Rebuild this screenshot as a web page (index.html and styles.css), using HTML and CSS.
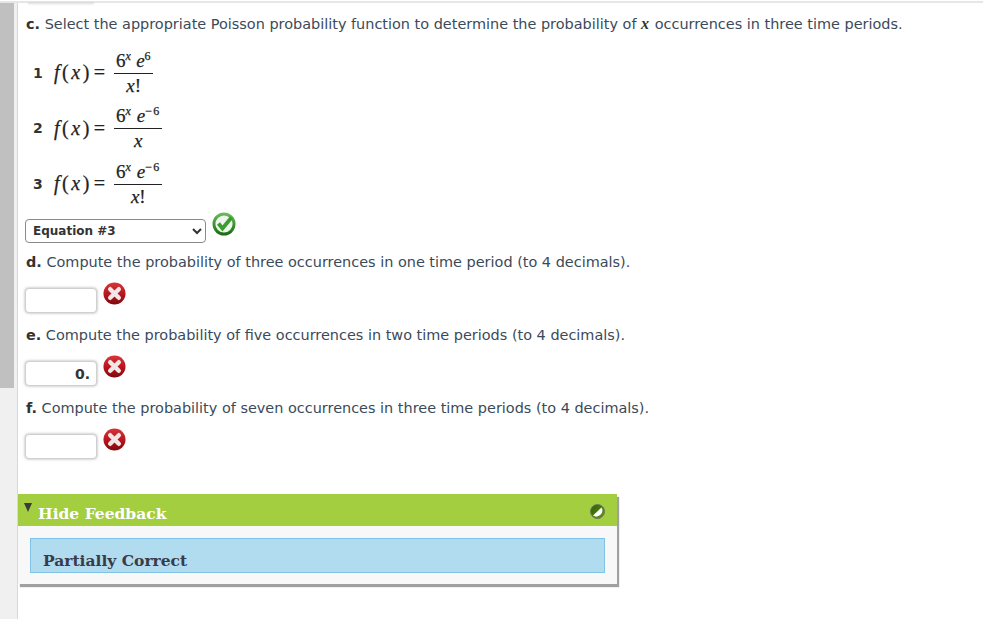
FILE: index.html
```html
<!DOCTYPE html>
<html lang="en">
<head>
    <meta charset="UTF-8">
    <title>Poisson probability</title>
    <link rel="stylesheet" href="styles.css">
</head>
<body>
    <svg class="defs" width="0" height="0">
        <defs>
            <linearGradient id="red-ball" x1="0" y1="0" x2="0" y2="1">
                <stop offset="0" stop-color="#d8343a"/>
                <stop offset="0.55" stop-color="#b8141c"/>
                <stop offset="1" stop-color="#7c0a0e"/>
            </linearGradient>
            <linearGradient id="green-ring" x1="0" y1="0" x2="0" y2="1">
                <stop offset="0" stop-color="#6cc05a"/>
                <stop offset="1" stop-color="#17690f"/>
            </linearGradient>
            <linearGradient id="green-knob" x1="0" y1="0" x2="1" y2="1">
                <stop offset="0" stop-color="#2f5a08"/>
                <stop offset="1" stop-color="#62980f"/>
            </linearGradient>
        </defs>
    </svg>
    <div class="top-line"></div>
    <div class="page">
        <div class="rail">
            <div class="rail-thumb"></div>
        </div>
        <div class="content">
            <div class="top-stub"></div>
            <p class="question q-c"><b>c.</b> Select the appropriate Poisson probability function to determine the probability of <i class="math-inline">x</i> occurrences in three time periods.</p>

            <div class="equations">
                <div class="equation">
                    <span class="eq-num">1</span>
                    <span class="math"><i>f</i>(<i>x</i>)</span>
                    <span class="equals">=</span>
                    <span class="frac">
                        <span class="numer">6<sup><i>x</i></sup> <i>e</i><sup>6</sup></span>
                        <span class="denom"><i>x</i>!</span>
                    </span>
                </div>
                <div class="equation">
                    <span class="eq-num">2</span>
                    <span class="math"><i>f</i>(<i>x</i>)</span>
                    <span class="equals">=</span>
                    <span class="frac frac-wide">
                        <span class="numer">6<sup><i>x</i></sup> <i>e</i><sup>−6</sup></span>
                        <span class="denom"><i>x</i></span>
                    </span>
                </div>
                <div class="equation">
                    <span class="eq-num">3</span>
                    <span class="math"><i>f</i>(<i>x</i>)</span>
                    <span class="equals">=</span>
                    <span class="frac frac-wide">
                        <span class="numer">6<sup><i>x</i></sup> <i>e</i><sup>−6</sup></span>
                        <span class="denom"><i>x</i>!</span>
                    </span>
                </div>
            </div>

            <div class="answer answer-select">
                <select class="dropdown">
                    <option>Equation #3</option>
                </select>
                <svg class="mark" width="24" height="24" viewBox="0 0 24 24">
                    <circle cx="12" cy="12" r="11.5" fill="url(#green-ring)"/>
                    <circle cx="12" cy="12" r="8.6" fill="#eef5ec"/>
                    <path d="M6.5 11.5 L10.5 16.5 L19.5 5.5" fill="none" stroke="#3c9c30" stroke-width="3.8"/>
                </svg>
            </div>

            <p class="question"><b>d.</b> Compute the probability of three occurrences in one time period (to 4 decimals).</p>
            <div class="answer">
                <input class="num-input" type="text" value="">
                <svg class="mark mark-wrong" width="23" height="23" viewBox="0 0 24 24">
                    <circle cx="12" cy="12" r="11.5" fill="url(#red-ball)"/>
                    <path d="M7.5 7.5 L16.5 16.5 M16.5 7.5 L7.5 16.5" stroke="#f2e6e6" stroke-width="4.6" stroke-linecap="round"/>
                </svg>
            </div>

            <p class="question"><b>e.</b> Compute the probability of five occurrences in two time periods (to 4 decimals).</p>
            <div class="answer">
                <input class="num-input" type="text" value="0.">
                <svg class="mark mark-wrong" width="23" height="23" viewBox="0 0 24 24">
                    <circle cx="12" cy="12" r="11.5" fill="url(#red-ball)"/>
                    <path d="M7.5 7.5 L16.5 16.5 M16.5 7.5 L7.5 16.5" stroke="#f2e6e6" stroke-width="4.6" stroke-linecap="round"/>
                </svg>
            </div>

            <p class="question"><b>f.</b> Compute the probability of seven occurrences in three time periods (to 4 decimals).</p>
            <div class="answer">
                <input class="num-input" type="text" value="">
                <svg class="mark mark-wrong" width="23" height="23" viewBox="0 0 24 24">
                    <circle cx="12" cy="12" r="11.5" fill="url(#red-ball)"/>
                    <path d="M7.5 7.5 L16.5 16.5 M16.5 7.5 L7.5 16.5" stroke="#f2e6e6" stroke-width="4.6" stroke-linecap="round"/>
                </svg>
            </div>

            <div class="feedback">
                <div class="feedback-head">
                    <span class="arrow"></span>
                    <span class="feedback-title">Hide Feedback</span>
                    <svg class="toggle" width="15" height="15" viewBox="0 0 15 15">
                        <circle cx="7.5" cy="7.5" r="7" fill="url(#green-knob)" stroke="#6a7a5a"/>
                        <path d="M3 11.5 L11.5 3.5 A6 6 0 0 1 3 11.5 Z" fill="#fff"/>
                    </svg>
                </div>
                <div class="feedback-body">
                    <div class="feedback-result">Partially Correct</div>
                </div>
            </div>
        </div>
    </div>
</body>
</html>
```

FILE: styles.css
```css
html, body {
    height: 100%;
}
body {
    margin: 0;
    display: flex;
    flex-direction: column;
    background-color: #fff;
    font-family: "DejaVu Sans", Verdana, sans-serif;
    font-size: 14.45px;
    color: #3a4a5a;
    overflow: hidden;
}
.defs {
    position: absolute;
}
.top-line {
    height: 2px;
    margin-top: 1px;
    flex-shrink: 0;
    background-color: #e6e6e6;
}
.page {
    flex: 1;
    display: flex;
}
.rail {
    width: 17px;
    flex-shrink: 0;
    background-color: #f0f0f0;
    border-right: 1px solid #d8d8d8;
}
.rail-thumb {
    width: 14px;
    height: 385px;
    background-color: #c0c0c0;
}
.content {
    flex: 1;
    position: relative;
}
.top-stub {
    position: absolute;
    top: -1px;
    left: 10px;
    width: 66px;
    height: 1px;
    background-color: #ddd;
    box-shadow: 0 1px 2px #ccc;
}
.question {
    margin: 0;
    padding-left: 8px;
    line-height: 18px;
    white-space: nowrap;
}
.question b {
    color: #333;
}
.q-c {
    padding-top: 12px;
}
.math-inline {
    font-family: "Liberation Serif", serif;
    font-weight: bold;
    font-size: 16px;
    margin-right: 1px;
    color: #333;
}
.equations {
    padding: 14px 0 0 15px;
    display: flex;
    flex-direction: column;
    gap: 4.5px;
}
.equation {
    display: flex;
    align-items: center;
    height: 51px;
    color: #222;
    font-family: "Liberation Serif", serif;
    -webkit-text-stroke: 0.25px #222;
}
.eq-num {
    width: 21px;
    font-family: "DejaVu Sans", Verdana, sans-serif;
    font-weight: bold;
    font-size: 14px;
    color: #333;
    -webkit-text-stroke: 0;
}
.math {
    font-size: 20px;
    letter-spacing: 2.5px;
    margin-right: 2px;
}
.equals {
    font-size: 20px;
    margin-right: 9px;
}
.frac {
    display: inline-flex;
    flex-direction: column;
    align-items: center;
    margin-top: 1px;
    font-size: 19px;
    line-height: 20px;
}
.numer {
    padding: 0 2px 2px;
    border-bottom: 1px solid #222;
    width: 100%;
    box-sizing: border-box;
    text-align: center;
    white-space: nowrap;
}
.numer sup {
    font-size: 12px;
    line-height: 0;
    letter-spacing: 0.5px;
}
.frac-wide .numer sup {
    letter-spacing: 1.2px;
}
.denom {
    padding-top: 2px;
}
.answer {
    display: flex;
    align-items: flex-start;
    padding: 10px 0 0 7px;
    height: 45px;
}
.answer-select {
    padding-top: 2.5px;
    height: 41px;
}
.dropdown {
    width: 181px;
    height: 24px;
    margin-top: 7px;
    padding: 1px 0 0 3px;
    background-color: #fff;
    border: 1px solid #8a8a8a;
    border-radius: 4px;
    font-family: "DejaVu Sans", Verdana, sans-serif;
    font-size: 12px;
    font-weight: bold;
    color: #333;
}
.mark {
    margin-left: 6px;
}
.mark-wrong {
    margin-top: 1px;
}
.num-input {
    width: 72px;
    height: 25px;
    box-sizing: border-box;
    margin-top: 7px;
    border: 1px solid #d0d0d0;
    border-radius: 4px;
    box-shadow: 0 0 3px #aaa;
    text-align: right;
    padding: 2px 6px 0 0;
    font-family: "DejaVu Sans", Verdana, sans-serif;
    font-size: 14px;
    font-weight: bold;
    color: #333;
}
.feedback {
    width: 599px;
    margin-top: 22px;
    background-color: #f8f8f8;
    box-shadow: 2px 3px 1px #a0a0a0;
}
.feedback-head {
    display: flex;
    align-items: center;
    height: 32px;
    background-color: #a2ce3f;
    padding: 0 12px 0 6px;
}
.arrow {
    width: 0;
    height: 0;
    margin-top: -5px;
    border-left: 4px solid transparent;
    border-right: 4px solid transparent;
    border-top: 9px solid #3a3a3a;
}
.feedback-title {
    flex: 1;
    margin-left: 6px;
    padding-top: 8px;
    font-family: "DejaVu Serif", Georgia, serif;
    font-weight: bold;
    font-size: 15.5px;
    color: #fff;
}
.toggle {
    margin-top: 4px;
}
.feedback-body {
    padding: 12px 12px 11px;
}
.feedback-result {
    height: 33px;
    line-height: 43px;
    background-color: #b1dbee;
    border: 1px solid #7fc3e6;
    padding-left: 12px;
    font-family: "DejaVu Serif", Georgia, serif;
    font-weight: bold;
    font-size: 15.5px;
    color: #3a3a48;
}
```
